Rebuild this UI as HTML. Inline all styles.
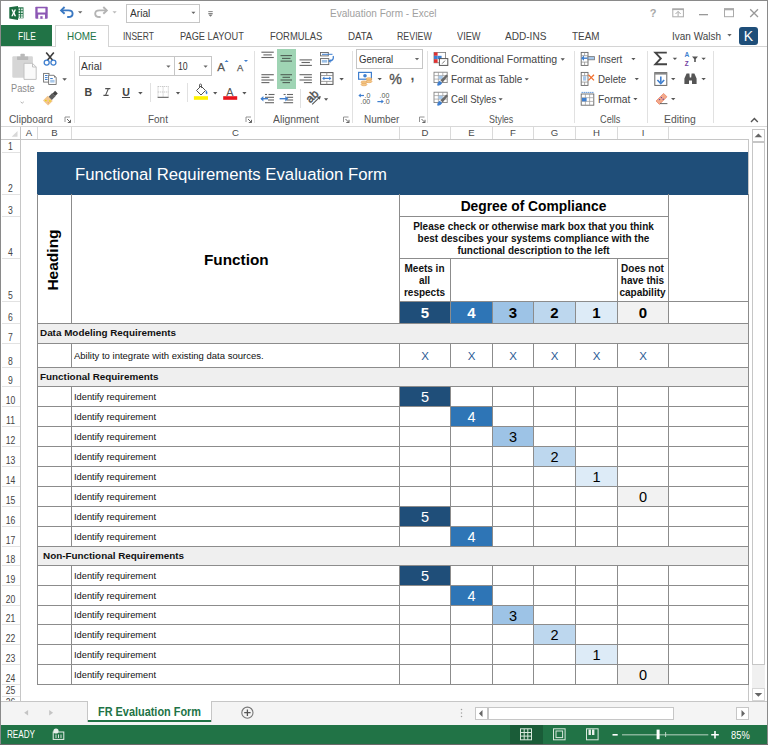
<!DOCTYPE html>
<html><head><meta charset="utf-8"><style>
html,body{margin:0;padding:0;}
body{width:768px;height:745px;position:relative;overflow:hidden;background:#fff;font-family:"Liberation Sans",sans-serif;}
</style></head><body>
<div style="position:absolute;left:0px;top:0px;width:768px;height:1px;background:#8a8a8a"></div>
<div style="position:absolute;left:0px;top:0px;width:1px;height:745px;background:#8a8a8a"></div>
<div style="position:absolute;left:767px;top:0px;width:1px;height:745px;background:#8a8a8a"></div>
<div style="position:absolute;left:0px;top:744px;width:768px;height:1px;background:#6a6a6a"></div>
<div style="position:absolute;left:330px;top:5px;white-space:nowrap;font-family:'Liberation Sans',sans-serif;font-size:11px;color:#a0a0a0;height:16px;line-height:16px;transform:scaleX(0.9121);transform-origin:0 0;">Evaluation Form - Excel</div>
<div style="position:absolute;left:126px;top:4px;width:74px;height:19px;background:#fff;border:1px solid #c6c6c6;box-sizing:border-box"></div>
<div style="position:absolute;left:129.5px;top:5px;white-space:nowrap;font-family:'Liberation Sans',sans-serif;font-size:10.5px;color:#333;height:16px;line-height:16px;transform:scaleX(0.9659);transform-origin:0 0;">Arial</div>
<div style="position:absolute;left:1px;top:25px;width:51px;height:22px;background:#217346"></div>
<div style="position:absolute;left:17.5px;top:27px;white-space:nowrap;font-family:'Liberation Sans',sans-serif;font-size:11px;color:#fff;height:18px;line-height:18px;transform:scaleX(0.7661);transform-origin:0 0;">FILE</div>
<div style="position:absolute;left:55px;top:25px;width:54px;height:22px;background:#fff;border:1px solid #d4d4d4;border-bottom:none;box-sizing:border-box"></div>
<div style="position:absolute;left:67px;top:27px;white-space:nowrap;font-family:'Liberation Sans',sans-serif;font-size:11px;color:#217346;height:18px;line-height:18px;transform:scaleX(0.8970);transform-origin:0 0;">HOME</div>
<div style="position:absolute;left:122.6px;top:27px;white-space:nowrap;font-family:'Liberation Sans',sans-serif;font-size:11px;color:#444;height:18px;line-height:18px;transform:scaleX(0.7673);transform-origin:0 0;">INSERT</div>
<div style="position:absolute;left:179.5px;top:27px;white-space:nowrap;font-family:'Liberation Sans',sans-serif;font-size:11px;color:#444;height:18px;line-height:18px;transform:scaleX(0.8393);transform-origin:0 0;">PAGE LAYOUT</div>
<div style="position:absolute;left:269.6px;top:27px;white-space:nowrap;font-family:'Liberation Sans',sans-serif;font-size:11px;color:#444;height:18px;line-height:18px;transform:scaleX(0.8573);transform-origin:0 0;">FORMULAS</div>
<div style="position:absolute;left:347.7px;top:27px;white-space:nowrap;font-family:'Liberation Sans',sans-serif;font-size:11px;color:#444;height:18px;line-height:18px;transform:scaleX(0.8875);transform-origin:0 0;">DATA</div>
<div style="position:absolute;left:397.3px;top:27px;white-space:nowrap;font-family:'Liberation Sans',sans-serif;font-size:11px;color:#444;height:18px;line-height:18px;transform:scaleX(0.8017);transform-origin:0 0;">REVIEW</div>
<div style="position:absolute;left:457.1px;top:27px;white-space:nowrap;font-family:'Liberation Sans',sans-serif;font-size:11px;color:#444;height:18px;line-height:18px;transform:scaleX(0.8356);transform-origin:0 0;">VIEW</div>
<div style="position:absolute;left:505.3px;top:27px;white-space:nowrap;font-family:'Liberation Sans',sans-serif;font-size:11px;color:#444;height:18px;line-height:18px;transform:scaleX(0.9152);transform-origin:0 0;">ADD-INS</div>
<div style="position:absolute;left:572px;top:27px;white-space:nowrap;font-family:'Liberation Sans',sans-serif;font-size:11px;color:#444;height:18px;line-height:18px;transform:scaleX(0.8998);transform-origin:0 0;">TEAM</div>
<div style="position:absolute;left:1px;top:46px;width:54px;height:1px;background:#d4d4d4"></div>
<div style="position:absolute;left:109px;top:46px;width:658px;height:1px;background:#d4d4d4"></div>
<div style="position:absolute;left:672px;top:26.5px;white-space:nowrap;font-family:'Liberation Sans',sans-serif;font-size:11.5px;color:#444;height:18px;line-height:18px;transform:scaleX(0.8677);transform-origin:0 0;">Ivan Walsh</div>
<div style="position:absolute;left:739px;top:27px;width:19px;height:18px;background:#1e4e79;border-radius:3px"></div>
<div style="position:absolute;left:739px;top:27px;white-space:nowrap;font-family:'Liberation Sans',sans-serif;font-size:14px;color:#fff;width:19px;height:18px;line-height:18px;text-align:center;">K</div>
<div style="position:absolute;left:1px;top:126px;width:766px;height:1px;background:#d8d8d8"></div>
<div style="position:absolute;left:74px;top:51px;width:1px;height:72px;background:#e1e1e1"></div>
<div style="position:absolute;left:254px;top:51px;width:1px;height:72px;background:#e1e1e1"></div>
<div style="position:absolute;left:352px;top:51px;width:1px;height:72px;background:#e1e1e1"></div>
<div style="position:absolute;left:427px;top:51px;width:1px;height:72px;background:#e1e1e1"></div>
<div style="position:absolute;left:574px;top:51px;width:1px;height:72px;background:#e1e1e1"></div>
<div style="position:absolute;left:647px;top:51px;width:1px;height:72px;background:#e1e1e1"></div>
<div style="position:absolute;left:713px;top:51px;width:1px;height:72px;background:#e1e1e1"></div>
<div style="position:absolute;left:8.8px;top:112px;white-space:nowrap;font-family:'Liberation Sans',sans-serif;font-size:11px;color:#555;height:15px;line-height:15px;transform:scaleX(0.9279);transform-origin:0 0;">Clipboard</div>
<div style="position:absolute;left:147.8px;top:112px;white-space:nowrap;font-family:'Liberation Sans',sans-serif;font-size:11px;color:#555;height:15px;line-height:15px;transform:scaleX(0.9039);transform-origin:0 0;">Font</div>
<div style="position:absolute;left:272.8px;top:112px;white-space:nowrap;font-family:'Liberation Sans',sans-serif;font-size:11px;color:#555;height:15px;line-height:15px;transform:scaleX(0.9403);transform-origin:0 0;">Alignment</div>
<div style="position:absolute;left:364.4px;top:112px;white-space:nowrap;font-family:'Liberation Sans',sans-serif;font-size:11px;color:#555;height:15px;line-height:15px;transform:scaleX(0.9048);transform-origin:0 0;">Number</div>
<div style="position:absolute;left:488.8px;top:112px;white-space:nowrap;font-family:'Liberation Sans',sans-serif;font-size:11px;color:#555;height:15px;line-height:15px;transform:scaleX(0.8108);transform-origin:0 0;">Styles</div>
<div style="position:absolute;left:600.4px;top:112px;white-space:nowrap;font-family:'Liberation Sans',sans-serif;font-size:11px;color:#555;height:15px;line-height:15px;transform:scaleX(0.8342);transform-origin:0 0;">Cells</div>
<div style="position:absolute;left:664px;top:112px;white-space:nowrap;font-family:'Liberation Sans',sans-serif;font-size:11px;color:#555;height:15px;line-height:15px;transform:scaleX(0.9453);transform-origin:0 0;">Editing</div>
<div style="position:absolute;left:1px;top:139px;width:747px;height:1px;background:#c6c6c6"></div>
<div style="position:absolute;left:20px;top:127px;width:1px;height:574px;background:#c6c6c6"></div>
<div style="position:absolute;left:20.5px;top:127px;white-space:nowrap;font-family:'Liberation Sans',sans-serif;font-size:9.6px;color:#4a4a4a;width:17px;height:12px;line-height:12px;text-align:center;">A</div>
<div style="position:absolute;left:37px;top:127px;width:1px;height:12px;background:#dadada"></div>
<div style="position:absolute;left:37.5px;top:127px;white-space:nowrap;font-family:'Liberation Sans',sans-serif;font-size:9.6px;color:#4a4a4a;width:34px;height:12px;line-height:12px;text-align:center;">B</div>
<div style="position:absolute;left:71px;top:127px;width:1px;height:12px;background:#dadada"></div>
<div style="position:absolute;left:71.5px;top:127px;white-space:nowrap;font-family:'Liberation Sans',sans-serif;font-size:9.6px;color:#4a4a4a;width:328px;height:12px;line-height:12px;text-align:center;">C</div>
<div style="position:absolute;left:399px;top:127px;width:1px;height:12px;background:#dadada"></div>
<div style="position:absolute;left:399.5px;top:127px;white-space:nowrap;font-family:'Liberation Sans',sans-serif;font-size:9.6px;color:#4a4a4a;width:51px;height:12px;line-height:12px;text-align:center;">D</div>
<div style="position:absolute;left:450px;top:127px;width:1px;height:12px;background:#dadada"></div>
<div style="position:absolute;left:450.5px;top:127px;white-space:nowrap;font-family:'Liberation Sans',sans-serif;font-size:9.6px;color:#4a4a4a;width:42px;height:12px;line-height:12px;text-align:center;">E</div>
<div style="position:absolute;left:492px;top:127px;width:1px;height:12px;background:#dadada"></div>
<div style="position:absolute;left:492.5px;top:127px;white-space:nowrap;font-family:'Liberation Sans',sans-serif;font-size:9.6px;color:#4a4a4a;width:41px;height:12px;line-height:12px;text-align:center;">F</div>
<div style="position:absolute;left:533px;top:127px;width:1px;height:12px;background:#dadada"></div>
<div style="position:absolute;left:533.5px;top:127px;white-space:nowrap;font-family:'Liberation Sans',sans-serif;font-size:9.6px;color:#4a4a4a;width:42px;height:12px;line-height:12px;text-align:center;">G</div>
<div style="position:absolute;left:575px;top:127px;width:1px;height:12px;background:#dadada"></div>
<div style="position:absolute;left:575.5px;top:127px;white-space:nowrap;font-family:'Liberation Sans',sans-serif;font-size:9.6px;color:#4a4a4a;width:42px;height:12px;line-height:12px;text-align:center;">H</div>
<div style="position:absolute;left:617px;top:127px;width:1px;height:12px;background:#dadada"></div>
<div style="position:absolute;left:617.5px;top:127px;white-space:nowrap;font-family:'Liberation Sans',sans-serif;font-size:9.6px;color:#4a4a4a;width:51px;height:12px;line-height:12px;text-align:center;">I</div>
<div style="position:absolute;left:668px;top:127px;width:1px;height:12px;background:#dadada"></div>
<div style="position:absolute;left:668.5px;top:127px;white-space:nowrap;font-family:'Liberation Sans',sans-serif;font-size:9.6px;color:#4a4a4a;width:80px;height:12px;line-height:12px;text-align:center;"></div>
<div style="position:absolute;left:748px;top:139px;width:1px;height:562px;background:#c6c6c6"></div>
<div style="position:absolute;left:2px;top:152px;width:18px;height:1px;background:#e2e2e2"></div>
<div style="position:absolute;left:0.8px;top:140.2px;white-space:nowrap;font-family:'Liberation Sans',sans-serif;font-size:10px;color:#444;transform:scaleX(0.86);transform-origin:50% 0;width:19px;height:13px;line-height:13px;text-align:center;">1</div>
<div style="position:absolute;left:2px;top:194px;width:18px;height:1px;background:#e2e2e2"></div>
<div style="position:absolute;left:0.8px;top:182.2px;white-space:nowrap;font-family:'Liberation Sans',sans-serif;font-size:10px;color:#444;transform:scaleX(0.86);transform-origin:50% 0;width:19px;height:13px;line-height:13px;text-align:center;">2</div>
<div style="position:absolute;left:2px;top:216px;width:18px;height:1px;background:#e2e2e2"></div>
<div style="position:absolute;left:0.8px;top:204.2px;white-space:nowrap;font-family:'Liberation Sans',sans-serif;font-size:10px;color:#444;transform:scaleX(0.86);transform-origin:50% 0;width:19px;height:13px;line-height:13px;text-align:center;">3</div>
<div style="position:absolute;left:2px;top:258px;width:18px;height:1px;background:#e2e2e2"></div>
<div style="position:absolute;left:0.8px;top:246.2px;white-space:nowrap;font-family:'Liberation Sans',sans-serif;font-size:10px;color:#444;transform:scaleX(0.86);transform-origin:50% 0;width:19px;height:13px;line-height:13px;text-align:center;">4</div>
<div style="position:absolute;left:2px;top:301px;width:18px;height:1px;background:#e2e2e2"></div>
<div style="position:absolute;left:0.8px;top:289.2px;white-space:nowrap;font-family:'Liberation Sans',sans-serif;font-size:10px;color:#444;transform:scaleX(0.86);transform-origin:50% 0;width:19px;height:13px;line-height:13px;text-align:center;">5</div>
<div style="position:absolute;left:2px;top:323px;width:18px;height:1px;background:#e2e2e2"></div>
<div style="position:absolute;left:0.8px;top:311.2px;white-space:nowrap;font-family:'Liberation Sans',sans-serif;font-size:10px;color:#444;transform:scaleX(0.86);transform-origin:50% 0;width:19px;height:13px;line-height:13px;text-align:center;">6</div>
<div style="position:absolute;left:2px;top:343px;width:18px;height:1px;background:#e2e2e2"></div>
<div style="position:absolute;left:0.8px;top:331.2px;white-space:nowrap;font-family:'Liberation Sans',sans-serif;font-size:10px;color:#444;transform:scaleX(0.86);transform-origin:50% 0;width:19px;height:13px;line-height:13px;text-align:center;">7</div>
<div style="position:absolute;left:2px;top:367px;width:18px;height:1px;background:#e2e2e2"></div>
<div style="position:absolute;left:0.8px;top:355.2px;white-space:nowrap;font-family:'Liberation Sans',sans-serif;font-size:10px;color:#444;transform:scaleX(0.86);transform-origin:50% 0;width:19px;height:13px;line-height:13px;text-align:center;">8</div>
<div style="position:absolute;left:2px;top:386px;width:18px;height:1px;background:#e2e2e2"></div>
<div style="position:absolute;left:0.8px;top:374.2px;white-space:nowrap;font-family:'Liberation Sans',sans-serif;font-size:10px;color:#444;transform:scaleX(0.86);transform-origin:50% 0;width:19px;height:13px;line-height:13px;text-align:center;">9</div>
<div style="position:absolute;left:2px;top:406px;width:18px;height:1px;background:#e2e2e2"></div>
<div style="position:absolute;left:0.8px;top:394.2px;white-space:nowrap;font-family:'Liberation Sans',sans-serif;font-size:10px;color:#444;transform:scaleX(0.86);transform-origin:50% 0;width:19px;height:13px;line-height:13px;text-align:center;">10</div>
<div style="position:absolute;left:2px;top:426px;width:18px;height:1px;background:#e2e2e2"></div>
<div style="position:absolute;left:0.8px;top:414.2px;white-space:nowrap;font-family:'Liberation Sans',sans-serif;font-size:10px;color:#444;transform:scaleX(0.86);transform-origin:50% 0;width:19px;height:13px;line-height:13px;text-align:center;">11</div>
<div style="position:absolute;left:2px;top:446px;width:18px;height:1px;background:#e2e2e2"></div>
<div style="position:absolute;left:0.8px;top:434.2px;white-space:nowrap;font-family:'Liberation Sans',sans-serif;font-size:10px;color:#444;transform:scaleX(0.86);transform-origin:50% 0;width:19px;height:13px;line-height:13px;text-align:center;">12</div>
<div style="position:absolute;left:2px;top:466px;width:18px;height:1px;background:#e2e2e2"></div>
<div style="position:absolute;left:0.8px;top:454.2px;white-space:nowrap;font-family:'Liberation Sans',sans-serif;font-size:10px;color:#444;transform:scaleX(0.86);transform-origin:50% 0;width:19px;height:13px;line-height:13px;text-align:center;">13</div>
<div style="position:absolute;left:2px;top:486px;width:18px;height:1px;background:#e2e2e2"></div>
<div style="position:absolute;left:0.8px;top:474.2px;white-space:nowrap;font-family:'Liberation Sans',sans-serif;font-size:10px;color:#444;transform:scaleX(0.86);transform-origin:50% 0;width:19px;height:13px;line-height:13px;text-align:center;">14</div>
<div style="position:absolute;left:2px;top:506px;width:18px;height:1px;background:#e2e2e2"></div>
<div style="position:absolute;left:0.8px;top:494.2px;white-space:nowrap;font-family:'Liberation Sans',sans-serif;font-size:10px;color:#444;transform:scaleX(0.86);transform-origin:50% 0;width:19px;height:13px;line-height:13px;text-align:center;">15</div>
<div style="position:absolute;left:2px;top:526px;width:18px;height:1px;background:#e2e2e2"></div>
<div style="position:absolute;left:0.8px;top:514.2px;white-space:nowrap;font-family:'Liberation Sans',sans-serif;font-size:10px;color:#444;transform:scaleX(0.86);transform-origin:50% 0;width:19px;height:13px;line-height:13px;text-align:center;">16</div>
<div style="position:absolute;left:2px;top:546px;width:18px;height:1px;background:#e2e2e2"></div>
<div style="position:absolute;left:0.8px;top:534.2px;white-space:nowrap;font-family:'Liberation Sans',sans-serif;font-size:10px;color:#444;transform:scaleX(0.86);transform-origin:50% 0;width:19px;height:13px;line-height:13px;text-align:center;">17</div>
<div style="position:absolute;left:2px;top:565px;width:18px;height:1px;background:#e2e2e2"></div>
<div style="position:absolute;left:0.8px;top:553.2px;white-space:nowrap;font-family:'Liberation Sans',sans-serif;font-size:10px;color:#444;transform:scaleX(0.86);transform-origin:50% 0;width:19px;height:13px;line-height:13px;text-align:center;">18</div>
<div style="position:absolute;left:2px;top:585px;width:18px;height:1px;background:#e2e2e2"></div>
<div style="position:absolute;left:0.8px;top:573.2px;white-space:nowrap;font-family:'Liberation Sans',sans-serif;font-size:10px;color:#444;transform:scaleX(0.86);transform-origin:50% 0;width:19px;height:13px;line-height:13px;text-align:center;">19</div>
<div style="position:absolute;left:2px;top:605px;width:18px;height:1px;background:#e2e2e2"></div>
<div style="position:absolute;left:0.8px;top:593.2px;white-space:nowrap;font-family:'Liberation Sans',sans-serif;font-size:10px;color:#444;transform:scaleX(0.86);transform-origin:50% 0;width:19px;height:13px;line-height:13px;text-align:center;">20</div>
<div style="position:absolute;left:2px;top:624px;width:18px;height:1px;background:#e2e2e2"></div>
<div style="position:absolute;left:0.8px;top:612.2px;white-space:nowrap;font-family:'Liberation Sans',sans-serif;font-size:10px;color:#444;transform:scaleX(0.86);transform-origin:50% 0;width:19px;height:13px;line-height:13px;text-align:center;">21</div>
<div style="position:absolute;left:2px;top:644px;width:18px;height:1px;background:#e2e2e2"></div>
<div style="position:absolute;left:0.8px;top:632.2px;white-space:nowrap;font-family:'Liberation Sans',sans-serif;font-size:10px;color:#444;transform:scaleX(0.86);transform-origin:50% 0;width:19px;height:13px;line-height:13px;text-align:center;">22</div>
<div style="position:absolute;left:2px;top:664px;width:18px;height:1px;background:#e2e2e2"></div>
<div style="position:absolute;left:0.8px;top:652.2px;white-space:nowrap;font-family:'Liberation Sans',sans-serif;font-size:10px;color:#444;transform:scaleX(0.86);transform-origin:50% 0;width:19px;height:13px;line-height:13px;text-align:center;">23</div>
<div style="position:absolute;left:2px;top:684px;width:18px;height:1px;background:#e2e2e2"></div>
<div style="position:absolute;left:0.8px;top:672.2px;white-space:nowrap;font-family:'Liberation Sans',sans-serif;font-size:10px;color:#444;transform:scaleX(0.86);transform-origin:50% 0;width:19px;height:13px;line-height:13px;text-align:center;">24</div>
<div style="position:absolute;left:2px;top:696px;width:18px;height:1px;background:#e2e2e2"></div>
<div style="position:absolute;left:0.8px;top:684.2px;white-space:nowrap;font-family:'Liberation Sans',sans-serif;font-size:10px;color:#444;transform:scaleX(0.86);transform-origin:50% 0;width:19px;height:13px;line-height:13px;text-align:center;">25</div>
<div style="position:absolute;left:0.8px;top:696.2px;white-space:nowrap;font-family:'Liberation Sans',sans-serif;font-size:10px;color:#444;transform:scaleX(0.86);transform-origin:50% 0;width:19px;height:13px;line-height:13px;text-align:center;">26</div>
<div style="position:absolute;left:37px;top:152px;width:711px;height:43px;background:#1f4e79"></div>
<div style="position:absolute;left:75px;top:153px;white-space:nowrap;font-family:'Liberation Sans',sans-serif;font-size:16.7px;color:#fff;height:44px;line-height:44px;transform:scaleX(1.0011);transform-origin:0 0;">Functional Requirements Evaluation Form</div>
<div style="position:absolute;left:37px;top:194px;width:1px;height:491px;background:#8c8c8c"></div>
<div style="position:absolute;left:748px;top:194px;width:1px;height:491px;background:#8c8c8c"></div>
<div style="position:absolute;left:71px;top:194px;width:1px;height:130px;background:#8c8c8c"></div>
<div style="position:absolute;left:399px;top:301px;width:350px;height:1px;background:#8c8c8c"></div>
<div style="position:absolute;left:399px;top:216px;width:270px;height:1px;background:#8c8c8c"></div>
<div style="position:absolute;left:399px;top:258px;width:270px;height:1px;background:#8c8c8c"></div>
<div style="position:absolute;left:37px;top:323px;width:712px;height:1px;background:#8c8c8c"></div>
<div style="position:absolute;left:399px;top:194px;width:1px;height:130px;background:#8c8c8c"></div>
<div style="position:absolute;left:668px;top:194px;width:1px;height:130px;background:#8c8c8c"></div>
<div style="position:absolute;left:450px;top:301px;width:1px;height:23px;background:#8c8c8c"></div>
<div style="position:absolute;left:492px;top:301px;width:1px;height:23px;background:#8c8c8c"></div>
<div style="position:absolute;left:533px;top:301px;width:1px;height:23px;background:#8c8c8c"></div>
<div style="position:absolute;left:575px;top:301px;width:1px;height:23px;background:#8c8c8c"></div>
<div style="position:absolute;left:617px;top:258px;width:1px;height:66px;background:#8c8c8c"></div>
<div style="position:absolute;left:450px;top:258px;width:1px;height:44px;background:#8c8c8c"></div>
<div style="position:absolute;left:400px;top:302px;width:50px;height:21px;background:#1f4e79"></div>
<div style="position:absolute;left:400px;top:302px;white-space:nowrap;font-family:'Liberation Sans',sans-serif;font-size:15px;font-weight:bold;color:#fff;width:50px;height:21px;line-height:21px;text-align:center;">5</div>
<div style="position:absolute;left:451px;top:302px;width:41px;height:21px;background:#2e75b6"></div>
<div style="position:absolute;left:451px;top:302px;white-space:nowrap;font-family:'Liberation Sans',sans-serif;font-size:15px;font-weight:bold;color:#fff;width:41px;height:21px;line-height:21px;text-align:center;">4</div>
<div style="position:absolute;left:493px;top:302px;width:40px;height:21px;background:#9dc3e6"></div>
<div style="position:absolute;left:493px;top:302px;white-space:nowrap;font-family:'Liberation Sans',sans-serif;font-size:15px;font-weight:bold;color:#000;width:40px;height:21px;line-height:21px;text-align:center;">3</div>
<div style="position:absolute;left:534px;top:302px;width:41px;height:21px;background:#bdd7ee"></div>
<div style="position:absolute;left:534px;top:302px;white-space:nowrap;font-family:'Liberation Sans',sans-serif;font-size:15px;font-weight:bold;color:#000;width:41px;height:21px;line-height:21px;text-align:center;">2</div>
<div style="position:absolute;left:576px;top:302px;width:41px;height:21px;background:#ddebf7"></div>
<div style="position:absolute;left:576px;top:302px;white-space:nowrap;font-family:'Liberation Sans',sans-serif;font-size:15px;font-weight:bold;color:#000;width:41px;height:21px;line-height:21px;text-align:center;">1</div>
<div style="position:absolute;left:618px;top:302px;width:50px;height:21px;background:#f2f2f2"></div>
<div style="position:absolute;left:618px;top:302px;white-space:nowrap;font-family:'Liberation Sans',sans-serif;font-size:15px;font-weight:bold;color:#000;width:50px;height:21px;line-height:21px;text-align:center;">0</div>
<div style="position:absolute;left:36px;top:195px;width:34px;height:129px;display:flex;align-items:center;justify-content:center"><div style="transform:rotate(-90deg);font-family:'Liberation Sans',sans-serif;font-weight:bold;font-size:15.5px;color:#000;white-space:nowrap">Heading</div></div>
<div style="position:absolute;left:203.7px;top:194.7px;white-space:nowrap;font-family:'Liberation Sans',sans-serif;font-size:15.2px;font-weight:bold;color:#000;height:130px;line-height:130px;transform:scaleX(1.0077);transform-origin:0 0;">Function</div>
<div style="position:absolute;left:399px;top:195px;white-space:nowrap;font-family:'Liberation Sans',sans-serif;font-size:13.8px;font-weight:bold;color:#000;width:269px;height:23px;line-height:23px;text-align:center;">Degree of Compliance</div>
<div style="position:absolute;left:399px;top:218px;width:269px;height:41px;display:flex;align-items:center;justify-content:center;text-align:center;font-family:'Liberation Sans',sans-serif;font-weight:bold;font-size:10px;line-height:12px;color:#111">Please check or otherwise mark box that you think<br>best descibes your systems compliance with the<br>functional description to the left</div>
<div style="position:absolute;left:399px;top:260px;width:51px;height:42px;display:flex;align-items:center;justify-content:center;text-align:center;font-family:'Liberation Sans',sans-serif;font-weight:bold;font-size:10px;line-height:12px;color:#111">Meets in<br>all<br>respects</div>
<div style="position:absolute;left:617px;top:260px;width:51px;height:42px;display:flex;align-items:center;justify-content:center;text-align:center;font-family:'Liberation Sans',sans-serif;font-weight:bold;font-size:10px;line-height:12px;color:#111">Does not<br>have this<br>capability</div>
<div style="position:absolute;left:38px;top:324px;width:710px;height:19px;background:#efefef"></div>
<div style="position:absolute;left:37px;top:343px;width:712px;height:1px;background:#8c8c8c"></div>
<div style="position:absolute;left:40px;top:323.3px;white-space:nowrap;font-family:'Liberation Sans',sans-serif;font-size:9.9px;font-weight:bold;color:#111;height:20px;line-height:20px;">Data Modeling Requirements</div>
<div style="position:absolute;left:71px;top:343px;width:1px;height:25px;background:#8c8c8c"></div>
<div style="position:absolute;left:399px;top:343px;width:1px;height:25px;background:#8c8c8c"></div>
<div style="position:absolute;left:450px;top:343px;width:1px;height:25px;background:#8c8c8c"></div>
<div style="position:absolute;left:492px;top:343px;width:1px;height:25px;background:#8c8c8c"></div>
<div style="position:absolute;left:533px;top:343px;width:1px;height:25px;background:#8c8c8c"></div>
<div style="position:absolute;left:575px;top:343px;width:1px;height:25px;background:#8c8c8c"></div>
<div style="position:absolute;left:617px;top:343px;width:1px;height:25px;background:#8c8c8c"></div>
<div style="position:absolute;left:668px;top:343px;width:1px;height:25px;background:#8c8c8c"></div>
<div style="position:absolute;left:37px;top:367px;width:712px;height:1px;background:#8c8c8c"></div>
<div style="position:absolute;left:73.6px;top:344.2px;white-space:nowrap;font-family:'Liberation Sans',sans-serif;font-size:9.6px;color:#111;height:23px;line-height:23px;transform:scaleX(0.9903);transform-origin:0 0;">Ability to integrate with existing data sources.</div>
<div style="position:absolute;left:400px;top:345px;white-space:nowrap;font-family:'Liberation Sans',sans-serif;font-size:11.5px;color:#2a5a94;width:50px;height:23px;line-height:23px;text-align:center;">X</div>
<div style="position:absolute;left:451px;top:345px;white-space:nowrap;font-family:'Liberation Sans',sans-serif;font-size:11.5px;color:#2a5a94;width:41px;height:23px;line-height:23px;text-align:center;">X</div>
<div style="position:absolute;left:493px;top:345px;white-space:nowrap;font-family:'Liberation Sans',sans-serif;font-size:11.5px;color:#2a5a94;width:40px;height:23px;line-height:23px;text-align:center;">X</div>
<div style="position:absolute;left:534px;top:345px;white-space:nowrap;font-family:'Liberation Sans',sans-serif;font-size:11.5px;color:#2a5a94;width:41px;height:23px;line-height:23px;text-align:center;">X</div>
<div style="position:absolute;left:576px;top:345px;white-space:nowrap;font-family:'Liberation Sans',sans-serif;font-size:11.5px;color:#2a5a94;width:41px;height:23px;line-height:23px;text-align:center;">X</div>
<div style="position:absolute;left:618px;top:345px;white-space:nowrap;font-family:'Liberation Sans',sans-serif;font-size:11.5px;color:#2a5a94;width:50px;height:23px;line-height:23px;text-align:center;">X</div>
<div style="position:absolute;left:38px;top:368px;width:710px;height:18px;background:#efefef"></div>
<div style="position:absolute;left:37px;top:386px;width:712px;height:1px;background:#8c8c8c"></div>
<div style="position:absolute;left:40px;top:367.3px;white-space:nowrap;font-family:'Liberation Sans',sans-serif;font-size:9.9px;font-weight:bold;color:#111;height:19px;line-height:19px;">Functional Requirements</div>
<div style="position:absolute;left:71px;top:386px;width:1px;height:21px;background:#8c8c8c"></div>
<div style="position:absolute;left:399px;top:386px;width:1px;height:21px;background:#8c8c8c"></div>
<div style="position:absolute;left:450px;top:386px;width:1px;height:21px;background:#8c8c8c"></div>
<div style="position:absolute;left:492px;top:386px;width:1px;height:21px;background:#8c8c8c"></div>
<div style="position:absolute;left:533px;top:386px;width:1px;height:21px;background:#8c8c8c"></div>
<div style="position:absolute;left:575px;top:386px;width:1px;height:21px;background:#8c8c8c"></div>
<div style="position:absolute;left:617px;top:386px;width:1px;height:21px;background:#8c8c8c"></div>
<div style="position:absolute;left:668px;top:386px;width:1px;height:21px;background:#8c8c8c"></div>
<div style="position:absolute;left:37px;top:406px;width:712px;height:1px;background:#8c8c8c"></div>
<div style="position:absolute;left:73.6px;top:386.5px;white-space:nowrap;font-family:'Liberation Sans',sans-serif;font-size:9.6px;color:#111;height:19px;line-height:19px;transform:scaleX(0.9670);transform-origin:0 0;">Identify requirement</div>
<div style="position:absolute;left:400px;top:387px;width:50px;height:19px;background:#1f4e79"></div>
<div style="position:absolute;left:400px;top:388px;white-space:nowrap;font-family:'Liberation Sans',sans-serif;font-size:14.5px;color:#fff;width:50px;height:19px;line-height:19px;text-align:center;">5</div>
<div style="position:absolute;left:71px;top:406px;width:1px;height:21px;background:#8c8c8c"></div>
<div style="position:absolute;left:399px;top:406px;width:1px;height:21px;background:#8c8c8c"></div>
<div style="position:absolute;left:450px;top:406px;width:1px;height:21px;background:#8c8c8c"></div>
<div style="position:absolute;left:492px;top:406px;width:1px;height:21px;background:#8c8c8c"></div>
<div style="position:absolute;left:533px;top:406px;width:1px;height:21px;background:#8c8c8c"></div>
<div style="position:absolute;left:575px;top:406px;width:1px;height:21px;background:#8c8c8c"></div>
<div style="position:absolute;left:617px;top:406px;width:1px;height:21px;background:#8c8c8c"></div>
<div style="position:absolute;left:668px;top:406px;width:1px;height:21px;background:#8c8c8c"></div>
<div style="position:absolute;left:37px;top:426px;width:712px;height:1px;background:#8c8c8c"></div>
<div style="position:absolute;left:73.6px;top:406.5px;white-space:nowrap;font-family:'Liberation Sans',sans-serif;font-size:9.6px;color:#111;height:19px;line-height:19px;transform:scaleX(0.9670);transform-origin:0 0;">Identify requirement</div>
<div style="position:absolute;left:451px;top:407px;width:41px;height:19px;background:#2e75b6"></div>
<div style="position:absolute;left:451px;top:408px;white-space:nowrap;font-family:'Liberation Sans',sans-serif;font-size:14.5px;color:#fff;width:41px;height:19px;line-height:19px;text-align:center;">4</div>
<div style="position:absolute;left:71px;top:426px;width:1px;height:21px;background:#8c8c8c"></div>
<div style="position:absolute;left:399px;top:426px;width:1px;height:21px;background:#8c8c8c"></div>
<div style="position:absolute;left:450px;top:426px;width:1px;height:21px;background:#8c8c8c"></div>
<div style="position:absolute;left:492px;top:426px;width:1px;height:21px;background:#8c8c8c"></div>
<div style="position:absolute;left:533px;top:426px;width:1px;height:21px;background:#8c8c8c"></div>
<div style="position:absolute;left:575px;top:426px;width:1px;height:21px;background:#8c8c8c"></div>
<div style="position:absolute;left:617px;top:426px;width:1px;height:21px;background:#8c8c8c"></div>
<div style="position:absolute;left:668px;top:426px;width:1px;height:21px;background:#8c8c8c"></div>
<div style="position:absolute;left:37px;top:446px;width:712px;height:1px;background:#8c8c8c"></div>
<div style="position:absolute;left:73.6px;top:426.5px;white-space:nowrap;font-family:'Liberation Sans',sans-serif;font-size:9.6px;color:#111;height:19px;line-height:19px;transform:scaleX(0.9670);transform-origin:0 0;">Identify requirement</div>
<div style="position:absolute;left:493px;top:427px;width:40px;height:19px;background:#9dc3e6"></div>
<div style="position:absolute;left:493px;top:428px;white-space:nowrap;font-family:'Liberation Sans',sans-serif;font-size:14.5px;color:#000;width:40px;height:19px;line-height:19px;text-align:center;">3</div>
<div style="position:absolute;left:71px;top:446px;width:1px;height:21px;background:#8c8c8c"></div>
<div style="position:absolute;left:399px;top:446px;width:1px;height:21px;background:#8c8c8c"></div>
<div style="position:absolute;left:450px;top:446px;width:1px;height:21px;background:#8c8c8c"></div>
<div style="position:absolute;left:492px;top:446px;width:1px;height:21px;background:#8c8c8c"></div>
<div style="position:absolute;left:533px;top:446px;width:1px;height:21px;background:#8c8c8c"></div>
<div style="position:absolute;left:575px;top:446px;width:1px;height:21px;background:#8c8c8c"></div>
<div style="position:absolute;left:617px;top:446px;width:1px;height:21px;background:#8c8c8c"></div>
<div style="position:absolute;left:668px;top:446px;width:1px;height:21px;background:#8c8c8c"></div>
<div style="position:absolute;left:37px;top:466px;width:712px;height:1px;background:#8c8c8c"></div>
<div style="position:absolute;left:73.6px;top:446.5px;white-space:nowrap;font-family:'Liberation Sans',sans-serif;font-size:9.6px;color:#111;height:19px;line-height:19px;transform:scaleX(0.9670);transform-origin:0 0;">Identify requirement</div>
<div style="position:absolute;left:534px;top:447px;width:41px;height:19px;background:#bdd7ee"></div>
<div style="position:absolute;left:534px;top:448px;white-space:nowrap;font-family:'Liberation Sans',sans-serif;font-size:14.5px;color:#000;width:41px;height:19px;line-height:19px;text-align:center;">2</div>
<div style="position:absolute;left:71px;top:466px;width:1px;height:21px;background:#8c8c8c"></div>
<div style="position:absolute;left:399px;top:466px;width:1px;height:21px;background:#8c8c8c"></div>
<div style="position:absolute;left:450px;top:466px;width:1px;height:21px;background:#8c8c8c"></div>
<div style="position:absolute;left:492px;top:466px;width:1px;height:21px;background:#8c8c8c"></div>
<div style="position:absolute;left:533px;top:466px;width:1px;height:21px;background:#8c8c8c"></div>
<div style="position:absolute;left:575px;top:466px;width:1px;height:21px;background:#8c8c8c"></div>
<div style="position:absolute;left:617px;top:466px;width:1px;height:21px;background:#8c8c8c"></div>
<div style="position:absolute;left:668px;top:466px;width:1px;height:21px;background:#8c8c8c"></div>
<div style="position:absolute;left:37px;top:486px;width:712px;height:1px;background:#8c8c8c"></div>
<div style="position:absolute;left:73.6px;top:466.5px;white-space:nowrap;font-family:'Liberation Sans',sans-serif;font-size:9.6px;color:#111;height:19px;line-height:19px;transform:scaleX(0.9670);transform-origin:0 0;">Identify requirement</div>
<div style="position:absolute;left:576px;top:467px;width:41px;height:19px;background:#ddebf7"></div>
<div style="position:absolute;left:576px;top:468px;white-space:nowrap;font-family:'Liberation Sans',sans-serif;font-size:14.5px;color:#000;width:41px;height:19px;line-height:19px;text-align:center;">1</div>
<div style="position:absolute;left:71px;top:486px;width:1px;height:21px;background:#8c8c8c"></div>
<div style="position:absolute;left:399px;top:486px;width:1px;height:21px;background:#8c8c8c"></div>
<div style="position:absolute;left:450px;top:486px;width:1px;height:21px;background:#8c8c8c"></div>
<div style="position:absolute;left:492px;top:486px;width:1px;height:21px;background:#8c8c8c"></div>
<div style="position:absolute;left:533px;top:486px;width:1px;height:21px;background:#8c8c8c"></div>
<div style="position:absolute;left:575px;top:486px;width:1px;height:21px;background:#8c8c8c"></div>
<div style="position:absolute;left:617px;top:486px;width:1px;height:21px;background:#8c8c8c"></div>
<div style="position:absolute;left:668px;top:486px;width:1px;height:21px;background:#8c8c8c"></div>
<div style="position:absolute;left:37px;top:506px;width:712px;height:1px;background:#8c8c8c"></div>
<div style="position:absolute;left:73.6px;top:486.5px;white-space:nowrap;font-family:'Liberation Sans',sans-serif;font-size:9.6px;color:#111;height:19px;line-height:19px;transform:scaleX(0.9670);transform-origin:0 0;">Identify requirement</div>
<div style="position:absolute;left:618px;top:487px;width:50px;height:19px;background:#f2f2f2"></div>
<div style="position:absolute;left:618px;top:488px;white-space:nowrap;font-family:'Liberation Sans',sans-serif;font-size:14.5px;color:#000;width:50px;height:19px;line-height:19px;text-align:center;">0</div>
<div style="position:absolute;left:71px;top:506px;width:1px;height:21px;background:#8c8c8c"></div>
<div style="position:absolute;left:399px;top:506px;width:1px;height:21px;background:#8c8c8c"></div>
<div style="position:absolute;left:450px;top:506px;width:1px;height:21px;background:#8c8c8c"></div>
<div style="position:absolute;left:492px;top:506px;width:1px;height:21px;background:#8c8c8c"></div>
<div style="position:absolute;left:533px;top:506px;width:1px;height:21px;background:#8c8c8c"></div>
<div style="position:absolute;left:575px;top:506px;width:1px;height:21px;background:#8c8c8c"></div>
<div style="position:absolute;left:617px;top:506px;width:1px;height:21px;background:#8c8c8c"></div>
<div style="position:absolute;left:668px;top:506px;width:1px;height:21px;background:#8c8c8c"></div>
<div style="position:absolute;left:37px;top:526px;width:712px;height:1px;background:#8c8c8c"></div>
<div style="position:absolute;left:73.6px;top:506.5px;white-space:nowrap;font-family:'Liberation Sans',sans-serif;font-size:9.6px;color:#111;height:19px;line-height:19px;transform:scaleX(0.9670);transform-origin:0 0;">Identify requirement</div>
<div style="position:absolute;left:400px;top:507px;width:50px;height:19px;background:#1f4e79"></div>
<div style="position:absolute;left:400px;top:508px;white-space:nowrap;font-family:'Liberation Sans',sans-serif;font-size:14.5px;color:#fff;width:50px;height:19px;line-height:19px;text-align:center;">5</div>
<div style="position:absolute;left:71px;top:526px;width:1px;height:21px;background:#8c8c8c"></div>
<div style="position:absolute;left:399px;top:526px;width:1px;height:21px;background:#8c8c8c"></div>
<div style="position:absolute;left:450px;top:526px;width:1px;height:21px;background:#8c8c8c"></div>
<div style="position:absolute;left:492px;top:526px;width:1px;height:21px;background:#8c8c8c"></div>
<div style="position:absolute;left:533px;top:526px;width:1px;height:21px;background:#8c8c8c"></div>
<div style="position:absolute;left:575px;top:526px;width:1px;height:21px;background:#8c8c8c"></div>
<div style="position:absolute;left:617px;top:526px;width:1px;height:21px;background:#8c8c8c"></div>
<div style="position:absolute;left:668px;top:526px;width:1px;height:21px;background:#8c8c8c"></div>
<div style="position:absolute;left:37px;top:546px;width:712px;height:1px;background:#8c8c8c"></div>
<div style="position:absolute;left:73.6px;top:526.5px;white-space:nowrap;font-family:'Liberation Sans',sans-serif;font-size:9.6px;color:#111;height:19px;line-height:19px;transform:scaleX(0.9670);transform-origin:0 0;">Identify requirement</div>
<div style="position:absolute;left:451px;top:527px;width:41px;height:19px;background:#2e75b6"></div>
<div style="position:absolute;left:451px;top:528px;white-space:nowrap;font-family:'Liberation Sans',sans-serif;font-size:14.5px;color:#fff;width:41px;height:19px;line-height:19px;text-align:center;">4</div>
<div style="position:absolute;left:38px;top:547px;width:710px;height:18px;background:#efefef"></div>
<div style="position:absolute;left:37px;top:565px;width:712px;height:1px;background:#8c8c8c"></div>
<div style="position:absolute;left:43px;top:545.5px;white-space:nowrap;font-family:'Liberation Sans',sans-serif;font-size:9.9px;font-weight:bold;color:#111;height:19px;line-height:19px;">Non-Functional Requirements</div>
<div style="position:absolute;left:71px;top:565px;width:1px;height:21px;background:#8c8c8c"></div>
<div style="position:absolute;left:399px;top:565px;width:1px;height:21px;background:#8c8c8c"></div>
<div style="position:absolute;left:450px;top:565px;width:1px;height:21px;background:#8c8c8c"></div>
<div style="position:absolute;left:492px;top:565px;width:1px;height:21px;background:#8c8c8c"></div>
<div style="position:absolute;left:533px;top:565px;width:1px;height:21px;background:#8c8c8c"></div>
<div style="position:absolute;left:575px;top:565px;width:1px;height:21px;background:#8c8c8c"></div>
<div style="position:absolute;left:617px;top:565px;width:1px;height:21px;background:#8c8c8c"></div>
<div style="position:absolute;left:668px;top:565px;width:1px;height:21px;background:#8c8c8c"></div>
<div style="position:absolute;left:37px;top:585px;width:712px;height:1px;background:#8c8c8c"></div>
<div style="position:absolute;left:73.6px;top:565.5px;white-space:nowrap;font-family:'Liberation Sans',sans-serif;font-size:9.6px;color:#111;height:19px;line-height:19px;transform:scaleX(0.9670);transform-origin:0 0;">Identify requirement</div>
<div style="position:absolute;left:400px;top:566px;width:50px;height:19px;background:#1f4e79"></div>
<div style="position:absolute;left:400px;top:567px;white-space:nowrap;font-family:'Liberation Sans',sans-serif;font-size:14.5px;color:#fff;width:50px;height:19px;line-height:19px;text-align:center;">5</div>
<div style="position:absolute;left:71px;top:585px;width:1px;height:21px;background:#8c8c8c"></div>
<div style="position:absolute;left:399px;top:585px;width:1px;height:21px;background:#8c8c8c"></div>
<div style="position:absolute;left:450px;top:585px;width:1px;height:21px;background:#8c8c8c"></div>
<div style="position:absolute;left:492px;top:585px;width:1px;height:21px;background:#8c8c8c"></div>
<div style="position:absolute;left:533px;top:585px;width:1px;height:21px;background:#8c8c8c"></div>
<div style="position:absolute;left:575px;top:585px;width:1px;height:21px;background:#8c8c8c"></div>
<div style="position:absolute;left:617px;top:585px;width:1px;height:21px;background:#8c8c8c"></div>
<div style="position:absolute;left:668px;top:585px;width:1px;height:21px;background:#8c8c8c"></div>
<div style="position:absolute;left:37px;top:605px;width:712px;height:1px;background:#8c8c8c"></div>
<div style="position:absolute;left:73.6px;top:585.5px;white-space:nowrap;font-family:'Liberation Sans',sans-serif;font-size:9.6px;color:#111;height:19px;line-height:19px;transform:scaleX(0.9670);transform-origin:0 0;">Identify requirement</div>
<div style="position:absolute;left:451px;top:586px;width:41px;height:19px;background:#2e75b6"></div>
<div style="position:absolute;left:451px;top:587px;white-space:nowrap;font-family:'Liberation Sans',sans-serif;font-size:14.5px;color:#fff;width:41px;height:19px;line-height:19px;text-align:center;">4</div>
<div style="position:absolute;left:71px;top:605px;width:1px;height:20px;background:#8c8c8c"></div>
<div style="position:absolute;left:399px;top:605px;width:1px;height:20px;background:#8c8c8c"></div>
<div style="position:absolute;left:450px;top:605px;width:1px;height:20px;background:#8c8c8c"></div>
<div style="position:absolute;left:492px;top:605px;width:1px;height:20px;background:#8c8c8c"></div>
<div style="position:absolute;left:533px;top:605px;width:1px;height:20px;background:#8c8c8c"></div>
<div style="position:absolute;left:575px;top:605px;width:1px;height:20px;background:#8c8c8c"></div>
<div style="position:absolute;left:617px;top:605px;width:1px;height:20px;background:#8c8c8c"></div>
<div style="position:absolute;left:668px;top:605px;width:1px;height:20px;background:#8c8c8c"></div>
<div style="position:absolute;left:37px;top:624px;width:712px;height:1px;background:#8c8c8c"></div>
<div style="position:absolute;left:73.6px;top:605.5px;white-space:nowrap;font-family:'Liberation Sans',sans-serif;font-size:9.6px;color:#111;height:18px;line-height:18px;transform:scaleX(0.9670);transform-origin:0 0;">Identify requirement</div>
<div style="position:absolute;left:493px;top:606px;width:40px;height:18px;background:#9dc3e6"></div>
<div style="position:absolute;left:493px;top:607px;white-space:nowrap;font-family:'Liberation Sans',sans-serif;font-size:14.5px;color:#000;width:40px;height:18px;line-height:18px;text-align:center;">3</div>
<div style="position:absolute;left:71px;top:624px;width:1px;height:21px;background:#8c8c8c"></div>
<div style="position:absolute;left:399px;top:624px;width:1px;height:21px;background:#8c8c8c"></div>
<div style="position:absolute;left:450px;top:624px;width:1px;height:21px;background:#8c8c8c"></div>
<div style="position:absolute;left:492px;top:624px;width:1px;height:21px;background:#8c8c8c"></div>
<div style="position:absolute;left:533px;top:624px;width:1px;height:21px;background:#8c8c8c"></div>
<div style="position:absolute;left:575px;top:624px;width:1px;height:21px;background:#8c8c8c"></div>
<div style="position:absolute;left:617px;top:624px;width:1px;height:21px;background:#8c8c8c"></div>
<div style="position:absolute;left:668px;top:624px;width:1px;height:21px;background:#8c8c8c"></div>
<div style="position:absolute;left:37px;top:644px;width:712px;height:1px;background:#8c8c8c"></div>
<div style="position:absolute;left:73.6px;top:624.5px;white-space:nowrap;font-family:'Liberation Sans',sans-serif;font-size:9.6px;color:#111;height:19px;line-height:19px;transform:scaleX(0.9670);transform-origin:0 0;">Identify requirement</div>
<div style="position:absolute;left:534px;top:625px;width:41px;height:19px;background:#bdd7ee"></div>
<div style="position:absolute;left:534px;top:626px;white-space:nowrap;font-family:'Liberation Sans',sans-serif;font-size:14.5px;color:#000;width:41px;height:19px;line-height:19px;text-align:center;">2</div>
<div style="position:absolute;left:71px;top:644px;width:1px;height:21px;background:#8c8c8c"></div>
<div style="position:absolute;left:399px;top:644px;width:1px;height:21px;background:#8c8c8c"></div>
<div style="position:absolute;left:450px;top:644px;width:1px;height:21px;background:#8c8c8c"></div>
<div style="position:absolute;left:492px;top:644px;width:1px;height:21px;background:#8c8c8c"></div>
<div style="position:absolute;left:533px;top:644px;width:1px;height:21px;background:#8c8c8c"></div>
<div style="position:absolute;left:575px;top:644px;width:1px;height:21px;background:#8c8c8c"></div>
<div style="position:absolute;left:617px;top:644px;width:1px;height:21px;background:#8c8c8c"></div>
<div style="position:absolute;left:668px;top:644px;width:1px;height:21px;background:#8c8c8c"></div>
<div style="position:absolute;left:37px;top:664px;width:712px;height:1px;background:#8c8c8c"></div>
<div style="position:absolute;left:73.6px;top:644.5px;white-space:nowrap;font-family:'Liberation Sans',sans-serif;font-size:9.6px;color:#111;height:19px;line-height:19px;transform:scaleX(0.9670);transform-origin:0 0;">Identify requirement</div>
<div style="position:absolute;left:576px;top:645px;width:41px;height:19px;background:#ddebf7"></div>
<div style="position:absolute;left:576px;top:646px;white-space:nowrap;font-family:'Liberation Sans',sans-serif;font-size:14.5px;color:#000;width:41px;height:19px;line-height:19px;text-align:center;">1</div>
<div style="position:absolute;left:71px;top:664px;width:1px;height:21px;background:#8c8c8c"></div>
<div style="position:absolute;left:399px;top:664px;width:1px;height:21px;background:#8c8c8c"></div>
<div style="position:absolute;left:450px;top:664px;width:1px;height:21px;background:#8c8c8c"></div>
<div style="position:absolute;left:492px;top:664px;width:1px;height:21px;background:#8c8c8c"></div>
<div style="position:absolute;left:533px;top:664px;width:1px;height:21px;background:#8c8c8c"></div>
<div style="position:absolute;left:575px;top:664px;width:1px;height:21px;background:#8c8c8c"></div>
<div style="position:absolute;left:617px;top:664px;width:1px;height:21px;background:#8c8c8c"></div>
<div style="position:absolute;left:668px;top:664px;width:1px;height:21px;background:#8c8c8c"></div>
<div style="position:absolute;left:37px;top:684px;width:712px;height:1px;background:#8c8c8c"></div>
<div style="position:absolute;left:73.6px;top:664.5px;white-space:nowrap;font-family:'Liberation Sans',sans-serif;font-size:9.6px;color:#111;height:19px;line-height:19px;transform:scaleX(0.9670);transform-origin:0 0;">Identify requirement</div>
<div style="position:absolute;left:618px;top:665px;width:50px;height:19px;background:#f2f2f2"></div>
<div style="position:absolute;left:618px;top:666px;white-space:nowrap;font-family:'Liberation Sans',sans-serif;font-size:14.5px;color:#000;width:50px;height:19px;line-height:19px;text-align:center;">0</div>
<div style="position:absolute;left:752px;top:129px;width:13px;height:13px;background:#fff;border:1px solid #c6c6c6;box-sizing:border-box"></div>
<div style="position:absolute;left:752px;top:142px;width:13px;height:523px;background:#fff;border:1px solid #c6c6c6;box-sizing:border-box"></div>
<div style="position:absolute;left:752px;top:665px;width:13px;height:23px;background:#f0f0f0"></div>
<div style="position:absolute;left:752px;top:688px;width:13px;height:13px;background:#fff;border:1px solid #d6d6d6;box-sizing:border-box"></div>
<div style="position:absolute;left:1px;top:701px;width:766px;height:24px;background:#f4f4f4"></div>
<div style="position:absolute;left:1px;top:701px;width:87px;height:1px;background:#c6c6c6"></div>
<div style="position:absolute;left:211px;top:701px;width:556px;height:1px;background:#c6c6c6"></div>
<div style="position:absolute;left:87px;top:701px;width:125px;height:21px;background:#fff;border-left:1px solid #c6c6c6;border-right:1px solid #c6c6c6;box-sizing:border-box"></div>
<div style="position:absolute;left:88px;top:720px;width:123px;height:2px;background:#217346"></div>
<div style="position:absolute;left:98px;top:703px;white-space:nowrap;font-family:'Liberation Sans',sans-serif;font-size:12px;font-weight:bold;color:#217346;height:18px;line-height:18px;transform:scaleX(0.9087);transform-origin:0 0;">FR Evaluation Form</div>
<div style="position:absolute;left:475px;top:707px;width:13px;height:13px;background:#fff;border:1px solid #c6c6c6;box-sizing:border-box"></div>
<div style="position:absolute;left:488px;top:707px;width:186px;height:13px;background:#fff;border:1px solid #c6c6c6;box-sizing:border-box"></div>
<div style="position:absolute;left:736px;top:707px;width:13px;height:13px;background:#fff;border:1px solid #c6c6c6;box-sizing:border-box"></div>
<div style="position:absolute;left:1px;top:725px;width:766px;height:19px;background:#217346"></div>
<div style="position:absolute;left:7.4px;top:726.4px;white-space:nowrap;font-family:'Liberation Sans',sans-serif;font-size:10.3px;color:#fff;height:18px;line-height:18px;transform:scaleX(0.7891);transform-origin:0 0;">READY</div>
<div style="position:absolute;left:510px;top:725px;width:33px;height:19px;background:#1a5c38"></div>
<div style="position:absolute;left:731.3px;top:726px;white-space:nowrap;font-family:'Liberation Sans',sans-serif;font-size:11px;color:#fff;height:18px;line-height:18px;transform:scaleX(0.8488);transform-origin:0 0;">85%</div>
<div style="position:absolute;left:11px;top:80px;white-space:nowrap;font-family:'Liberation Sans',sans-serif;font-size:11px;color:#8c8c8c;height:17px;line-height:17px;transform:scaleX(0.8386);transform-origin:0 0;">Paste</div>
<div style="position:absolute;left:79px;top:56px;width:96px;height:20px;border:1px solid #c6c6c6;box-sizing:border-box;background:#fff"></div>
<div style="position:absolute;left:174px;top:56px;width:38px;height:20px;border:1px solid #c6c6c6;box-sizing:border-box;background:#fff"></div>
<div style="position:absolute;left:81.3px;top:57px;white-space:nowrap;font-family:'Liberation Sans',sans-serif;font-size:11px;color:#333;height:18px;line-height:18px;transform:scaleX(0.9402);transform-origin:0 0;">Arial</div>
<div style="position:absolute;left:178.3px;top:57px;white-space:nowrap;font-family:'Liberation Sans',sans-serif;font-size:11px;color:#333;height:18px;line-height:18px;transform:scaleX(0.7918);transform-origin:0 0;">10</div>
<div style="position:absolute;left:150px;top:83px;width:1px;height:19px;background:#e1e1e1"></div>
<div style="position:absolute;left:187px;top:83px;width:1px;height:19px;background:#e1e1e1"></div>
<div style="position:absolute;left:277px;top:49px;width:19px;height:40px;background:#9fd4b4"></div>
<div style="position:absolute;left:300px;top:89px;width:1px;height:19px;background:#e1e1e1"></div>
<div style="position:absolute;left:356px;top:49px;width:67px;height:20px;border:1px solid #c6c6c6;box-sizing:border-box;background:#fff"></div>
<div style="position:absolute;left:358.9px;top:50px;white-space:nowrap;font-family:'Liberation Sans',sans-serif;font-size:11.2px;color:#333;height:18px;line-height:18px;transform:scaleX(0.8590);transform-origin:0 0;">General</div>
<div style="position:absolute;left:450.8px;top:51px;white-space:nowrap;font-family:'Liberation Sans',sans-serif;font-size:11px;color:#444;height:17px;line-height:17px;transform:scaleX(0.9596);transform-origin:0 0;">Conditional Formatting</div>
<div style="position:absolute;left:450.8px;top:71px;white-space:nowrap;font-family:'Liberation Sans',sans-serif;font-size:11px;color:#444;height:17px;line-height:17px;transform:scaleX(0.9050);transform-origin:0 0;">Format as Table</div>
<div style="position:absolute;left:450.8px;top:91px;white-space:nowrap;font-family:'Liberation Sans',sans-serif;font-size:11px;color:#444;height:17px;line-height:17px;transform:scaleX(0.8698);transform-origin:0 0;">Cell Styles</div>
<div style="position:absolute;left:597.8px;top:51px;white-space:nowrap;font-family:'Liberation Sans',sans-serif;font-size:11px;color:#444;height:17px;line-height:17px;transform:scaleX(0.8795);transform-origin:0 0;">Insert</div>
<div style="position:absolute;left:597.8px;top:71px;white-space:nowrap;font-family:'Liberation Sans',sans-serif;font-size:11px;color:#444;height:17px;line-height:17px;transform:scaleX(0.8869);transform-origin:0 0;">Delete</div>
<div style="position:absolute;left:597.8px;top:91px;white-space:nowrap;font-family:'Liberation Sans',sans-serif;font-size:11px;color:#444;height:17px;line-height:17px;transform:scaleX(0.9299);transform-origin:0 0;">Format</div>
<svg style="position:absolute;left:0;top:0" width="768" height="745" viewBox="0 0 768 745">
<rect x="16" y="7.3" width="7.5" height="11" fill="#1e7145"/>
<rect x="18.6" y="8.5" width="1.6" height="1.8" fill="#e8f3ec"/>
<rect x="21" y="8.5" width="1.8" height="1.8" fill="#cfe6d8"/>
<rect x="18.6" y="11.2" width="1.6" height="1.8" fill="#e8f3ec"/>
<rect x="21" y="11.2" width="1.8" height="1.8" fill="#cfe6d8"/>
<rect x="18.6" y="13.9" width="1.6" height="1.8" fill="#e8f3ec"/>
<rect x="21" y="13.9" width="1.8" height="1.8" fill="#cfe6d8"/>
<rect x="18.6" y="16.2" width="1.6" height="1.8" fill="#e8f3ec"/>
<rect x="21" y="16.2" width="1.8" height="1.8" fill="#cfe6d8"/>
<path d="M9.3 7.3 L18 5.9 L18 19.9 L9.3 18.5 Z" fill="#1b6b3f"/>
<path d="M11.4 9.4 L13 9.4 L13.7 11.7 L14.5 9.4 L16 9.4 L14.6 12.8 L16.1 16.2 L14.5 16.2 L13.7 13.9 L12.9 16.2 L11.3 16.2 L12.8 12.8 Z" fill="#fff"/>
<rect x="35.3" y="6.8" width="12.4" height="12" rx="0.8" fill="#8c57b4"/>
<rect x="37.6" y="8.3" width="7.8" height="4.2" fill="#fff"/>
<rect x="38.2" y="14.6" width="6.8" height="4.2" fill="#fff"/>
<rect x="40.3" y="16.2" width="2.3" height="2.6" fill="#8c57b4"/>
<path d="M61.5 10.4 L68.3 10.4 Q72.6 10.4 72.6 13.7 Q72.6 17 68.3 17 L67.2 17" fill="none" stroke="#3a78c2" stroke-width="1.9"/>
<path d="M64.6 7 L61.1 10.4 L64.6 13.8" fill="none" stroke="#3a78c2" stroke-width="1.9"/>
<path d="M78.0 11.15 L82.4 11.15 L80.2 13.450000000000001 Z" fill="#666"/>
<path d="M106.5 10.4 L99.5 10.4 Q95.2 10.4 95.2 13.7 Q95.2 17 99.5 17 L100.6 17" fill="none" stroke="#b4b4b4" stroke-width="1.9"/>
<path d="M103.3 7 L106.8 10.4 L103.3 13.8" fill="none" stroke="#b4b4b4" stroke-width="1.9"/>
<path d="M112.5 11.15 L116.69999999999999 11.15 L114.6 13.450000000000001 Z" fill="#bbb"/>
<path d="M191.4 11.700000000000001 L195.4 11.700000000000001 L193.4 13.9 Z" fill="#666"/>
<rect x="208.3" y="11.2" width="4.4" height="0.9" fill="#777"/>
<rect x="208.3" y="13" width="4.4" height="0.9" fill="#777"/>
<path d="M208.3 14.5 L212.7 14.5 L210.5 16.7 Z" fill="#777"/>
<text x="653" y="17" font-family="Liberation Sans" font-weight="bold" font-size="11" fill="#a8a8a8" text-anchor="middle">?</text>
<rect x="672.8" y="9" width="10.6" height="7.8" fill="none" stroke="#aaa" stroke-width="1"/>
<rect x="672.3" y="8.5" width="11.6" height="1.6" fill="#aaa"/>
<path d="M675.5 14 L678.1 11.4 L680.7 14 M678.1 11.6 L678.1 16.5" fill="none" stroke="#aaa" stroke-width="1"/>
<rect x="699" y="14" width="9" height="1.3" fill="#999"/>
<rect x="724.5" y="8.8" width="9" height="7.9" fill="none" stroke="#aaa" stroke-width="1"/>
<rect x="724" y="8.3" width="10" height="2" fill="#aaa"/>
<path d="M750.2 9.2 L758 17 M758 9.2 L750.2 17" stroke="#999" stroke-width="1.3"/>
<path d="M727.3 34.099999999999994 L731.7 34.099999999999994 L729.5 36.5 Z" fill="#666"/>
<rect x="12.3" y="56.3" width="20.6" height="21.5" rx="1.2" fill="#d6d6d6"/>
<rect x="17" y="56.5" width="11.2" height="3.4" rx="0.6" fill="#b9b9b9"/>
<rect x="20.4" y="53.8" width="4.4" height="3.2" rx="0.8" fill="#b9b9b9"/>
<path d="M24 63.3 L32.5 63.3 L36.2 67 L36.2 79.4 L24 79.4 Z" fill="#fafafa" stroke="#c2c2c2" stroke-width="1"/>
<path d="M32.5 63.3 L32.5 67 L36.2 67" fill="none" stroke="#c2c2c2" stroke-width="1"/>
<path d="M20.6 101.8 L22.2 103.2 L23.8 101.8" fill="none" stroke="#aaa" stroke-width="0.9"/>
<path d="M46.2 52.4 L52.8 60.6 M53.8 52.4 L47.2 60.6" stroke="#3c3c3c" stroke-width="1.6"/>
<circle cx="46.7" cy="62.6" r="2.5" fill="none" stroke="#3f7fcf" stroke-width="1.3"/>
<circle cx="53.4" cy="62.6" r="2.5" fill="none" stroke="#3f7fcf" stroke-width="1.3"/>
<rect x="43.6" y="73.4" width="5.4" height="8.7" fill="#fff" stroke="#707070" stroke-width="0.9"/>
<rect x="45" y="75" width="2.6" height="1" fill="#3f7fcf"/><rect x="45" y="77.1" width="2.6" height="1" fill="#3f7fcf"/><rect x="45" y="79" width="2.6" height="1" fill="#3f7fcf"/>
<path d="M48.6 75.3 L54 75.3 L56.2 77.5 L56.2 84.5 L48.6 84.5 Z" fill="#fff" stroke="#707070" stroke-width="0.9"/>
<path d="M54 75.3 L56.2 77.5 L54 77.5 Z" fill="#777"/>
<rect x="50.2" y="78" width="2.6" height="1" fill="#3f7fcf"/>
<rect x="50.2" y="79.8" width="4.4" height="2.8" fill="#a8c8ea"/>
<path d="M62.3 78.2 L66.89999999999999 78.2 L64.6 80.8 Z" fill="#555"/>
<g transform="translate(50.2 98.4) rotate(-45)"><rect x="-6.6" y="-3.6" width="6.6" height="7.2" fill="#f3c68c"/><circle cx="-4.6" cy="-1.6" r="0.8" fill="#e8d800"/><circle cx="-2" cy="1.6" r="0.8" fill="#e8d800"/><circle cx="-4.4" cy="1.8" r="0.6" fill="#e8a060"/><rect x="0" y="-2.3" width="5.2" height="4.6" fill="#5e5e5e"/><rect x="5.2" y="-1.9" width="3.6" height="3.8" fill="#444"/></g>
<path d="M65 122 L65 117 L70 117" fill="none" stroke="#888" stroke-width="0.9"/>
<path d="M67 119 L70.5 122.5 M70.5 119.8 L70.5 122.5 L67.8 122.5" fill="none" stroke="#666" stroke-width="1"/>
<path d="M246 122 L246 117 L251 117" fill="none" stroke="#888" stroke-width="0.9"/>
<path d="M248 119 L251.5 122.5 M251.5 119.8 L251.5 122.5 L248.8 122.5" fill="none" stroke="#666" stroke-width="1"/>
<path d="M343.5 122 L343.5 117 L348.5 117" fill="none" stroke="#888" stroke-width="0.9"/>
<path d="M345.5 119 L349.0 122.5 M349.0 119.8 L349.0 122.5 L346.3 122.5" fill="none" stroke="#666" stroke-width="1"/>
<path d="M419.5 122 L419.5 117 L424.5 117" fill="none" stroke="#888" stroke-width="0.9"/>
<path d="M421.5 119 L425.0 122.5 M425.0 119.8 L425.0 122.5 L422.3 122.5" fill="none" stroke="#666" stroke-width="1"/>
<path d="M166.3 65.44999999999999 L170.5 65.44999999999999 L168.4 67.75 Z" fill="#666"/>
<path d="M203.5 65.44999999999999 L207.7 65.44999999999999 L205.6 67.75 Z" fill="#666"/>
<text x="217.2" y="70.8" font-family="Liberation Sans" font-size="11.6" fill="#555" stroke="#555" stroke-width="0.25">A</text>
<path d="M224.5 62.1 L226.6 59.9 L228.7 62.1 Z" fill="#3f7fcf"/>
<text x="237" y="70.8" font-family="Liberation Sans" font-size="9.4" fill="#555" stroke="#555" stroke-width="0.25">A</text>
<path d="M243.9 59.9 L248 59.9 L245.95 62.1 Z" fill="#3f7fcf"/>
<text x="84.5" y="95.8" font-family="Liberation Sans" font-weight="bold" font-size="10.6" fill="#444">B</text>
<path d="M105.2 88.6 H110.4 M103.4 95.4 H108.6 M108.4 88.6 L105.5 95.4" fill="none" stroke="#505050" stroke-width="1.1"/>
<text x="122.2" y="95.8" font-family="Liberation Sans" font-weight="bold" font-size="10.6" fill="#444">U</text>
<rect x="122" y="97" width="8" height="1" fill="#444"/>
<path d="M138.20000000000002 92.0 L142.6 92.0 L140.4 94.4 Z" fill="#555"/>
<path d="M157.8 86.5 H168.4 M157.8 92 H168.4 M158 86.5 V97 M163.1 86.5 V97 M168.3 86.5 V97" fill="none" stroke="#b8b8b8" stroke-width="0.9" stroke-dasharray="1 1"/>
<rect x="157.6" y="96.8" width="11" height="1" fill="#555"/>
<path d="M175.9 92.0 L180.1 92.0 L178 94.4 Z" fill="#555"/>
<path d="M196.5 90.5 L201 86 L205.5 90.5 L201 95 Z" fill="#fff" stroke="#555" stroke-width="1"/>
<path d="M199.5 87.5 L199.5 85 Q199.5 84 200.5 84 Q201.5 84 201.5 85 L201.5 88" fill="none" stroke="#555" stroke-width="0.9"/>
<path d="M206 90.2 Q208.2 92 207.2 94 Q206 94.5 205.6 93 Z" fill="#3f7fcf"/>
<rect x="193.9" y="96.2" width="14.1" height="3.6" fill="#fef200"/>
<path d="M213.1 92.0 L217.29999999999998 92.0 L215.2 94.4 Z" fill="#555"/>
<text x="226.3" y="95.6" font-family="Liberation Sans" font-size="10.8" fill="#555">A</text>
<rect x="223.2" y="96.2" width="14" height="3.6" fill="#e8141c"/>
<path d="M242.3 92.0 L246.5 92.0 L244.4 94.4 Z" fill="#555"/>
<rect x="261.4" y="51.650000000000006" width="12.4" height="1.1" fill="#666"/>
<rect x="263.4" y="54.35" width="8.4" height="1.1" fill="#666"/>
<rect x="261.4" y="56.95" width="12.4" height="1.1" fill="#666"/>
<rect x="280.5" y="55.050000000000004" width="11.5" height="1.1" fill="#4f5f55"/>
<rect x="282.0" y="57.85" width="8.5" height="1.1" fill="#4f5f55"/>
<rect x="280.5" y="60.550000000000004" width="11.5" height="1.1" fill="#4f5f55"/>
<rect x="299.5" y="59.35" width="12.4" height="1.1" fill="#666"/>
<rect x="301.5" y="61.95" width="8.4" height="1.1" fill="#666"/>
<rect x="299.5" y="64.85000000000001" width="12.4" height="1.1" fill="#666"/>
<rect x="261.4" y="74.15" width="12.4" height="1.1" fill="#666"/>
<rect x="261.4" y="76.75" width="8" height="1.1" fill="#666"/>
<rect x="261.4" y="79.45" width="12.4" height="1.1" fill="#666"/>
<rect x="261.4" y="82.05" width="8" height="1.1" fill="#666"/>
<rect x="280.5" y="74.15" width="11.5" height="1.1" fill="#4f5f55"/>
<rect x="282.5" y="76.75" width="7.5" height="1.1" fill="#4f5f55"/>
<rect x="280.5" y="79.45" width="11.5" height="1.1" fill="#4f5f55"/>
<rect x="282.5" y="82.05" width="7.5" height="1.1" fill="#4f5f55"/>
<rect x="299.5" y="74.15" width="12.4" height="1.1" fill="#666"/>
<rect x="303.9" y="76.75" width="8" height="1.1" fill="#666"/>
<rect x="299.5" y="79.45" width="12.4" height="1.1" fill="#666"/>
<rect x="303.9" y="82.05" width="8" height="1.1" fill="#666"/>
<rect x="320.5" y="52.5" width="7.8" height="3.4" fill="#fff" stroke="#666" stroke-width="0.9"/>
<rect x="322" y="53.8" width="10.5" height="1" fill="#3f7fcf"/>
<rect x="320.5" y="58.6" width="8.3" height="6" fill="#fff" stroke="#666" stroke-width="0.9"/>
<rect x="321.8" y="60" width="5.4" height="2.6" fill="#9cc0e6"/>
<path d="M333.2 56 Q334.2 60.5 329.5 61" fill="none" stroke="#3f7fcf" stroke-width="1.3"/>
<path d="M328.2 61 L330.5 59 L330.5 63 Z" fill="#3f7fcf"/>
<rect x="320.6" y="72.6" width="12.4" height="11.8" fill="#fff" stroke="#555" stroke-width="1"/>
<path d="M320.6 75.5 H333 M320.6 81.4 H333 M326.8 72.6 V75.5 M326.8 81.4 V84.4" stroke="#888" stroke-width="0.8"/>
<path d="M323 78.4 H330.6" stroke="#3f7fcf" stroke-width="1.2"/>
<path d="M322.2 78.4 L324.4 76.6 L324.4 80.2 Z M331.4 78.4 L329.2 76.6 L329.2 80.2 Z" fill="#3f7fcf"/>
<path d="M339.40000000000003 78.0 L343.8 78.0 L341.6 80.4 Z" fill="#555"/>
<rect x="265" y="93.95" width="2" height="1.1" fill="#666"/>
<rect x="265" y="96.75" width="9" height="1.1" fill="#666"/>
<rect x="268" y="99.45" width="6" height="1.1" fill="#666"/>
<rect x="265" y="102.15" width="9" height="1.1" fill="#666"/>
<rect x="268.5" y="93.95" width="6" height="1.1" fill="#666"/>
<path d="M261 98.7 H268" stroke="#3f7fcf" stroke-width="1.4"/><path d="M260.4 98.7 L263.4 96 L263.4 101.4 Z" fill="#3f7fcf"/>
<rect x="283.6" y="93.95" width="2" height="1.1" fill="#666"/>
<rect x="286.6" y="96.75" width="6.5" height="1.1" fill="#666"/>
<rect x="286.6" y="99.45" width="6.5" height="1.1" fill="#666"/>
<rect x="283.6" y="102.15" width="9.5" height="1.1" fill="#666"/>
<rect x="287" y="93.95" width="6" height="1.1" fill="#666"/>
<path d="M279.6 98.7 H286" stroke="#3f7fcf" stroke-width="1.4"/><path d="M288.3 98.7 L285.3 96 L285.3 101.4 Z" fill="#3f7fcf"/>
<text x="0" y="0" font-family="Liberation Sans" font-size="11.5" fill="#505050" stroke="#505050" stroke-width="0.45" transform="translate(310.2 103.4) rotate(-45)">ab</text>
<path d="M312.2 104.4 L320 96.8" stroke="#555" stroke-width="1.1"/><path d="M320.8 96 L317 97 L319.8 99.8 Z" fill="#555"/>
<path d="M324.0 98.35 L328.20000000000005 98.35 L326.1 100.65 Z" fill="#555"/>
<path d="M414.9 58.050000000000004 L419.1 58.050000000000004 L417 60.35 Z" fill="#666"/>
<rect x="358.6" y="72.4" width="12.8" height="6.8" fill="#fff" stroke="#3f7fcf" stroke-width="1.2"/>
<circle cx="365" cy="75.8" r="1.8" fill="#3f7fcf"/>
<ellipse cx="369" cy="79" rx="3" ry="1.3" fill="#f5c88a" stroke="#e0a050" stroke-width="0.6"/><ellipse cx="369" cy="81.4" rx="3" ry="1.3" fill="#f5c88a" stroke="#e0a050" stroke-width="0.6"/>
<ellipse cx="364" cy="82.2" rx="3" ry="1.3" fill="#f5c88a" stroke="#e0a050" stroke-width="0.6"/><ellipse cx="364" cy="84.5" rx="3" ry="1.3" fill="#f5c88a" stroke="#e0a050" stroke-width="0.6"/>
<path d="M377.5 78.10000000000001 L381.9 78.10000000000001 L379.7 80.3 Z" fill="#555"/>
<text x="389.3" y="83.6" font-family="Liberation Sans" font-size="14.2" fill="#555" stroke="#555" stroke-width="0.35">%</text>
<text x="410.6" y="79.6" font-family="Liberation Sans" font-weight="bold" font-size="14" fill="#555">,</text>
<path d="M359 95.5 H364" stroke="#3f7fcf" stroke-width="1.2"/><path d="M358.4 95.5 L360.8 93.5 L360.8 97.5 Z" fill="#3f7fcf"/>
<text x="364.5" y="97.6" font-family="Liberation Sans" font-size="7" fill="#555">.0</text>
<text x="360.5" y="103.9" font-family="Liberation Sans" font-size="7" fill="#555">.00</text>
<text x="379.6" y="97.6" font-family="Liberation Sans" font-size="7" fill="#555">.00</text>
<path d="M377.4 101.6 H382.8" stroke="#3f7fcf" stroke-width="1.2"/><path d="M383.8 101.6 L381.4 99.6 L381.4 103.6 Z" fill="#3f7fcf"/>
<text x="383.8" y="103.9" font-family="Liberation Sans" font-size="7" fill="#555">.0</text>
<path d="M560.6 58.35 L564.8000000000001 58.35 L562.7 60.65 Z" fill="#555"/>
<path d="M524.6 78.14999999999999 L528.8000000000001 78.14999999999999 L526.7 80.45 Z" fill="#555"/>
<path d="M498.5 98.14999999999999 L502.70000000000005 98.14999999999999 L500.6 100.45 Z" fill="#555"/>
<rect x="434" y="52.4" width="11.6" height="10.4" fill="#fff" stroke="#777" stroke-width="0.8"/>
<rect x="434" y="52.4" width="3.6" height="3.4" fill="#e03030"/><rect x="434" y="55.8" width="3.6" height="3.4" fill="#3f7fcf"/><rect x="434" y="59.2" width="3.6" height="3.6" fill="#e03030"/>
<rect x="437.6" y="55.8" width="4" height="3.4" fill="#3f7fcf"/>
<rect x="439.4" y="58.6" width="8.4" height="6.8" fill="#fff" stroke="#555" stroke-width="1"/>
<path d="M442.2 63.6 L445 60.6" stroke="#777" stroke-width="1"/>
<rect x="434" y="72.2" width="13.2" height="10.4" fill="#fff" stroke="#777" stroke-width="0.8"/>
<path d="M434 75.60000000000001 H447.2 M434 79.10000000000001 H447.2 M438.4 72.2 V82.60000000000001 M442.8 72.2 V82.60000000000001" stroke="#999" stroke-width="0.7"/>
<rect x="438.6" y="75.8" width="4" height="3.2" fill="#a8c8ea"/>
<path d="M437.3 85.60000000000001 Q436.8 82.7 439.8 80.8 L442.2 83.2 Q440.6 86.0 437.3 85.60000000000001 Z" fill="#3f7fcf"/>
<path d="M440.4 80.2 L446.4 74.4 L448 76.0 L442.6 82.60000000000001 Z" fill="#6a6a6a"/>
<rect x="434" y="92.2" width="13.2" height="10.4" fill="#fff" stroke="#777" stroke-width="0.8"/>
<path d="M434 95.60000000000001 H447.2 M434 99.10000000000001 H447.2 M438.4 92.2 V102.60000000000001 M442.8 92.2 V102.60000000000001" stroke="#999" stroke-width="0.7"/>
<rect x="438.6" y="95.8" width="4" height="3.2" fill="#a8c8ea"/>
<path d="M437.3 105.60000000000001 Q436.8 102.7 439.8 100.8 L442.2 103.2 Q440.6 106.0 437.3 105.60000000000001 Z" fill="#3f7fcf"/>
<path d="M440.4 100.2 L446.4 94.4 L448 96.0 L442.6 102.60000000000001 Z" fill="#6a6a6a"/>
<path d="M631.3 58.050000000000004 L635.5 58.050000000000004 L633.4 60.35 Z" fill="#555"/>
<path d="M634.6999999999999 78.05 L638.9 78.05 L636.8 80.35000000000001 Z" fill="#555"/>
<path d="M633.3 98.05 L637.5 98.05 L635.4 100.35000000000001 Z" fill="#555"/>
<rect x="581.2" y="52.4" width="6.8" height="13" fill="#fff" stroke="#666" stroke-width="0.9"/>
<path d="M581.2 55.699999999999996 H588 M581.2 62.099999999999994 H588 M584.6 52.4 V55.699999999999996 M584.6 62.099999999999994 V65.4" stroke="#888" stroke-width="0.7"/>
<rect x="588" y="56.6" width="6.6" height="3.2" fill="#a8c8ea" stroke="#777" stroke-width="0.8"/>
<path d="M582 58.2 H587.5" stroke="#3f7fcf" stroke-width="1.4"/><path d="M581 58.2 L584 55.6 L584 60.8 Z" fill="#3f7fcf"/>
<rect x="581.2" y="72.4" width="6.8" height="13" fill="#fff" stroke="#666" stroke-width="0.9"/>
<path d="M581.2 75.7 H588 M581.2 82.10000000000001 H588 M584.6 72.4 V75.7 M584.6 82.10000000000001 V85.4" stroke="#888" stroke-width="0.7"/>
<rect x="583" y="76.2" width="3.2" height="4.4" fill="#a8c8ea"/>
<path d="M588.4 74.8 L594 80.4 M594 74.8 L588.4 80.4" stroke="#f07030" stroke-width="1.3"/>
<rect x="581.2" y="94" width="12.6" height="11.2" fill="#fff" stroke="#666" stroke-width="0.9"/>
<path d="M581.2 97.7 H593.8 M581.2 101.4 H593.8 M585.4 94 V105.2 M589.6 94 V105.2" stroke="#999" stroke-width="0.7"/>
<rect x="582" y="97.9" width="4.6" height="3.4" fill="#3f7fcf"/>
<path d="M581.6 92.4 H594" stroke="#3f7fcf" stroke-width="1" stroke-dasharray="1.2 0.8"/>
<path d="M666.8 52.6 L655.4 52.6 L660.8 58.4 L655.4 64.2 L667 64.2" fill="none" stroke="#444" stroke-width="1.9" stroke-linejoin="miter"/>
<path d="M672.6999999999999 57.65 L677.1 57.65 L674.9 59.949999999999996 Z" fill="#555"/>
<text x="684.6" y="56.6" font-family="Liberation Sans" font-weight="bold" font-size="6.6" fill="#3f7fcf">A</text>
<text x="684.8" y="65.9" font-family="Liberation Sans" font-weight="bold" font-size="6.4" fill="#7040a0">Z</text>
<path d="M692 56.6 H698 L695.8 59 V62 L694.2 62 V59 Z" fill="#555"/>
<path d="M701.4 57.65 L705.8000000000001 57.65 L703.6 59.949999999999996 Z" fill="#555"/>
<rect x="654.8" y="72.6" width="12" height="12.8" fill="#fff" stroke="#666" stroke-width="1"/>
<rect x="654.8" y="72.6" width="12" height="2" fill="#888"/>
<path d="M660.8 76.5 V82.5" stroke="#3f7fcf" stroke-width="1.6"/><path d="M657.4 80 L660.8 83.6 L664.2 80" fill="none" stroke="#3f7fcf" stroke-width="1.6"/>
<path d="M671.0 78.05 L675.4000000000001 78.05 L673.2 80.35000000000001 Z" fill="#555"/>
<path d="M684.4 84 L684.4 78.4 L686.6 73.4 L689.4 73.4 L689.8 77.6 L691.2 77.6 L691.6 73.4 L694.4 73.4 L696.6 78.4 L696.6 84 L692 84 L692 80.4 L689 80.4 L689 84 Z" fill="#555"/>
<path d="M701.4 78.05 L705.8000000000001 78.05 L703.6 80.35000000000001 Z" fill="#555"/>
<path d="M656 101 L663.6 93.4 L667 96.8 L659.4 104.4 Z" fill="#f4a98a" stroke="#e07050" stroke-width="0.6"/>
<circle cx="661.4" cy="97.6" r="0.7" fill="#6040a0"/><circle cx="663.2" cy="99.2" r="0.7" fill="#6040a0"/><circle cx="659.6" cy="99.6" r="0.7" fill="#6040a0"/>
<rect x="660" y="103.2" width="7.4" height="0.9" fill="#555"/>
<path d="M671.0 98.05 L675.4000000000001 98.05 L673.2 100.35000000000001 Z" fill="#555"/>
<path d="M751 122 L754.4 118.6 L757.8 122" fill="none" stroke="#555" stroke-width="1.4"/>
<path d="M17.5 131 L17.5 136.8 L11.7 136.8 Z" fill="#d8d8d8"/>
<path d="M754.6 137.2 L758.4 133.4 L762.2 137.2 Z" fill="#666"/>
<path d="M754.6 693 L762.2 693 L758.4 696.8 Z" fill="#666"/>
<path d="M479 713.5 L482.5 710 L482.5 717 Z" fill="#666"/>
<path d="M745 713.5 L741.5 710 L741.5 717 Z" fill="#666"/>
<path d="M24.2 712.8 L28.1 710 L28.1 715.6 Z" fill="#c4c4c4"/>
<path d="M53.1 712.8 L49.2 710 L49.2 715.6 Z" fill="#c4c4c4"/>
<circle cx="461.5" cy="709.4" r="0.75" fill="#a0a0a0"/><circle cx="461.5" cy="712.9" r="0.75" fill="#a0a0a0"/><circle cx="461.5" cy="716.4" r="0.75" fill="#a0a0a0"/>
<circle cx="247.4" cy="712.7" r="5.6" fill="none" stroke="#777" stroke-width="1.1"/>
<path d="M247.4 709.5 V716 M244.2 712.7 H250.6" stroke="#555" stroke-width="1.3"/>
<rect x="53.2" y="732" width="10.6" height="7.4" fill="none" stroke="#e8f0ea" stroke-width="1"/>
<circle cx="56" cy="731" r="2.6" fill="#e8f0ea"/>
<path d="M56 734.5 V738 M58.5 734.5 V738 M61 734.5 V738" stroke="#e8f0ea" stroke-width="0.9"/>
<rect x="520.5" y="728.8" width="11" height="11" fill="none" stroke="#d8e8dc" stroke-width="1"/>
<path d="M524.2 728.8 V739.8 M527.8 728.8 V739.8 M520.5 732.5 H531.5 M520.5 736.1 H531.5" stroke="#d8e8dc" stroke-width="1"/>
<rect x="553.5" y="728.8" width="11.6" height="11" fill="none" stroke="#d8e8dc" stroke-width="1"/>
<rect x="556" y="731" width="6.6" height="6.6" fill="none" stroke="#d8e8dc" stroke-width="1"/>
<rect x="586.5" y="728.8" width="11.6" height="11" fill="none" stroke="#d8e8dc" stroke-width="1"/>
<rect x="588.5" y="729.5" width="2.4" height="5.5" fill="#e8f0ea"/><rect x="592" y="729.5" width="2.4" height="5.5" fill="#e8f0ea"/>
<rect x="612.5" y="734" width="5.2" height="1.6" fill="#fff"/>
<rect x="622" y="734.4" width="86.3" height="0.9" fill="#c8dccf"/>
<rect x="656.6" y="729.6" width="3" height="9.6" fill="#fff"/>
<rect x="665.2" y="732" width="0.9" height="5" fill="#c8dccf"/>
<path d="M711.2 734.8 H718.8 M715 731 V738.6" stroke="#fff" stroke-width="1.6"/>
</svg>
</body></html>
